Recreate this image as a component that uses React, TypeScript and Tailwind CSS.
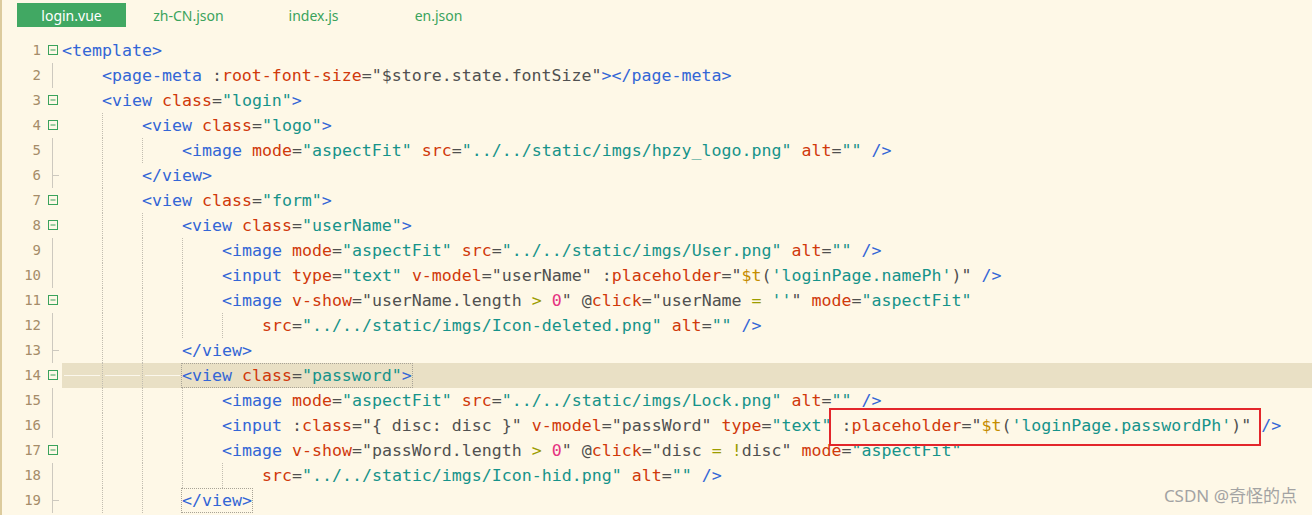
type Tok = [string, string];

const colors: Record<string, string> = {
  t: "text-[#3366d6]",
  a: "text-[#d0390b]",
  g: "text-[#505050]",
  s: "text-[#16938a]",
  o: "text-[#9c9c00]",
  n: "text-[#e5337f]",
  d: "text-[#c48c00]",
};

const sa = (name: string, val: string): Tok[] => [
  [" ", "g"],
  [name, "a"],
  ["=", "g"],
  [`"${val}"`, "s"],
];

const openView = (cls: string): Tok[] => [["<view", "t"], ...sa("class", cls), [">", "t"]];
const closeView: Tok[] = [["</view>", "t"]];
const img = (src: string): Tok[] => [
  ["<image", "t"],
  ...sa("mode", "aspectFit"),
  ...sa("src", src),
  ...sa("alt", ""),
  [" />", "t"],
];

type Line = {
  indent: number;
  gutter: "fold" | "line" | "end";
  toks: Tok[];
  active?: boolean;
  boxed?: boolean;
};

const lines: Line[] = [
  { indent: 0, gutter: "fold", toks: [["<template>", "t"]] },
  {
    indent: 1,
    gutter: "line",
    toks: [
      ["<page-meta", "t"],
      [" :", "g"],
      ["root-font-size", "a"],
      ["=", "g"],
      ['"$store.state.fontSize"', "g"],
      ["></page-meta>", "t"],
    ],
  },
  { indent: 1, gutter: "fold", toks: openView("login") },
  { indent: 2, gutter: "fold", toks: openView("logo") },
  { indent: 3, gutter: "line", toks: img("../../static/imgs/hpzy_logo.png") },
  { indent: 2, gutter: "end", toks: closeView },
  { indent: 2, gutter: "fold", toks: openView("form") },
  { indent: 3, gutter: "fold", toks: openView("userName") },
  { indent: 4, gutter: "line", toks: img("../../static/imgs/User.png") },
  {
    indent: 4,
    gutter: "line",
    toks: [
      ["<input", "t"],
      ...sa("type", "text"),
      [" ", "g"],
      ["v-model", "a"],
      ["=", "g"],
      ['"userName"', "g"],
      [" :", "g"],
      ["placeholder", "a"],
      ["=", "g"],
      ['"', "g"],
      ["$t", "d"],
      ["(", "g"],
      ["'loginPage.namePh'", "s"],
      [")", "g"],
      ['"', "g"],
      [" />", "t"],
    ],
  },
  {
    indent: 4,
    gutter: "fold",
    toks: [
      ["<image", "t"],
      [" ", "g"],
      ["v-show", "a"],
      ["=", "g"],
      ['"userName.length ', "g"],
      [">", "o"],
      [" ", "g"],
      ["0", "n"],
      ['"', "g"],
      [" @", "g"],
      ["click", "a"],
      ["=", "g"],
      ['"userName ', "g"],
      ["=", "o"],
      [" ", "g"],
      ["''", "s"],
      ['"', "g"],
      ...sa("mode", "aspectFit"),
    ],
  },
  {
    indent: 5,
    gutter: "line",
    toks: [
      ["src", "a"],
      ["=", "g"],
      ['"../../static/imgs/Icon-deleted.png"', "s"],
      ...sa("alt", ""),
      [" />", "t"],
    ],
  },
  { indent: 3, gutter: "end", toks: closeView },
  { indent: 3, gutter: "fold", toks: openView("password"), active: true, boxed: true },
  { indent: 4, gutter: "line", toks: img("../../static/imgs/Lock.png") },
  {
    indent: 4,
    gutter: "line",
    toks: [
      ["<input", "t"],
      [" :", "g"],
      ["class", "a"],
      ["=", "g"],
      ['"{ disc: disc }"', "g"],
      [" ", "g"],
      ["v-model", "a"],
      ["=", "g"],
      ['"passWord"', "g"],
      ...sa("type", "text"),
      [" :", "g"],
      ["placeholder", "a"],
      ["=", "g"],
      ['"', "g"],
      ["$t", "d"],
      ["(", "g"],
      ["'loginPage.passwordPh'", "s"],
      [")", "g"],
      ['"', "g"],
      [" />", "t"],
    ],
  },
  {
    indent: 4,
    gutter: "fold",
    toks: [
      ["<image", "t"],
      [" ", "g"],
      ["v-show", "a"],
      ["=", "g"],
      ['"passWord.length ', "g"],
      [">", "o"],
      [" ", "g"],
      ["0", "n"],
      ['"', "g"],
      [" @", "g"],
      ["click", "a"],
      ["=", "g"],
      ['"disc ', "g"],
      ["=", "o"],
      [" ", "g"],
      ["!", "o"],
      ["disc", "g"],
      ['"', "g"],
      ...sa("mode", "aspectFit"),
    ],
  },
  {
    indent: 5,
    gutter: "line",
    toks: [
      ["src", "a"],
      ["=", "g"],
      ['"../../static/imgs/Icon-hid.png"', "s"],
      ...sa("alt", ""),
      [" />", "t"],
    ],
  },
  { indent: 3, gutter: "end", toks: closeView, boxed: true },
];

function FoldMark({ kind }: { kind: Line["gutter"] }) {
  if (kind === "fold") {
    return (
      <div className="flex h-full w-[21px] items-center pl-[7px]">
        <svg width="10" height="10" viewBox="0 0 10 10">
          <rect x="0.5" y="0.5" width="9" height="9" fill="none" stroke="#3aa35c" />
          <line x1="2.5" y1="5" x2="7.5" y2="5" stroke="#3aa35c" />
        </svg>
      </div>
    );
  }
  return (
    <div className="flex h-full w-[21px] items-center pl-[11px]">
      <div className="h-full w-px bg-[#cdc9bf]" />
      {kind === "end" && <div className="h-px w-[6px] bg-[#cdc9bf]" />}
    </div>
  );
}

function CodeLine({ line, no }: { line: Line; no: number }) {
  const text = line.toks.map(([s, c], i) => (
    <span key={i} className={colors[c]}>
      {s}
    </span>
  ));
  return (
    <div className="flex h-[25px]">
      <div className="w-[39px] text-right font-['DejaVu_Sans_Mono',monospace] text-[14px] leading-[25px] text-[#a58c69]">
        {no}
      </div>
      <FoldMark kind={line.gutter} />
      <div className={`flex flex-1 items-center ${line.active ? "bg-[#e9e0c5]" : ""}`}>
        {Array.from({ length: line.indent }).map((_, k) => (
          <div
            key={k}
            className={`flex h-full w-10 shrink-0 items-center ${
              k > 0 ? "border-l border-dotted border-[#c2bdb0]" : ""
            }`}
          >
            {line.active && <div className="mx-[2px] h-px flex-1 bg-[#fbf7ec]" />}
          </div>
        ))}
        <span
          className={`whitespace-pre font-['DejaVu_Sans_Mono',monospace] text-[16.6px] leading-[23px] ${
            line.boxed ? "outline-1 outline-dotted outline-[#a8a396]" : ""
          }`}
        >
          {text}
        </span>
      </div>
    </div>
  );
}

export default function App() {
  const tabs = ["login.vue", "zh-CN.json", "index.js", "en.json"];
  return (
    <div className="relative h-[515px] w-[1312px] overflow-hidden border-l-2 border-[#dccb9d] bg-[#fef8e7]">
      <div className="flex h-[37.5px] items-start pt-[3px] pl-[15px] font-['Noto_Sans',sans-serif] text-[14px]">
        {tabs.map((t, i) =>
          i === 0 ? (
            <div
              key={t}
              className="flex h-[24px] w-[109px] items-center justify-center bg-[#41a863] text-white"
            >
              {t}
            </div>
          ) : (
            <div key={t} className="flex h-[24px] w-[125px] items-center justify-center text-[#3aa35c]">
              {t}
            </div>
          )
        )}
      </div>
      <div className="flex flex-col">
        {lines.map((l, i) => (
          <CodeLine key={i} line={l} no={i + 1} />
        ))}
      </div>
      <div className="absolute left-[827px] top-[408px] h-[38px] w-[432px] border-2 border-[#e3262b]" />
      <div className="absolute bottom-[7px] right-[15px] font-['Noto_Sans','Noto_Sans_CJK_SC',sans-serif] text-[17px] text-[#a3a3a3]">
        CSDN @奇怪的点
      </div>
    </div>
  );
}
